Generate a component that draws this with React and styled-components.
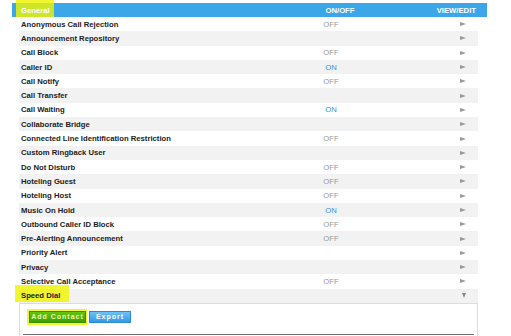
import styled, { createGlobalStyle } from "styled-components";

const GlobalStyle = createGlobalStyle`
  body {
    margin: 0;
    background: #fff;
    font-family: "Liberation Sans", Arial, sans-serif;
  }
`;

const Page = styled.div`
  width: 511px;
  height: 336px;
  overflow: hidden;
  padding: 3px 0 0 12px;
  box-sizing: border-box;
`;

const Header = styled.div`
  width: 475px;
  height: 14px;
  background: #3ba7e9;
  display: grid;
  grid-template-columns: 279px 80px 1fr;
  align-items: center;
  color: #fff;
  font-size: 7.7px;
  font-weight: bold;
  box-sizing: border-box;
  padding-left: 9px;
`;

const HeadCell = styled.div`
  text-align: ${(p) => p.$align || "left"};
  padding-right: ${(p) => (p.$align === "right" ? "11px" : "0")};
`;

const Highlight = styled.span`
  position: relative;
  z-index: 0;
  display: inline-flex;
  align-items: center;

  &::before {
    content: "";
    position: absolute;
    z-index: -1;
    top: ${(p) => p.$t}px;
    bottom: ${(p) => p.$b}px;
    left: ${(p) => p.$l}px;
    right: ${(p) => p.$r}px;
    background: rgba(238, 244, 0, 0.82);
    pointer-events: none;
  }
`;

const List = styled.div`
  margin-left: 7px;
  width: 459px;
`;

const Row = styled.div`
  height: 14.3px;
  display: grid;
  grid-template-columns: 272px 80px 1fr;
  align-items: center;
  background: ${(p) => (p.$odd ? "#f2f2f2" : "#fff")};
  font-size: 7.7px;
`;

const Name = styled.div`
  padding-left: 2px;
  font-weight: bold;
  color: #1c1c1c;
  white-space: nowrap;
`;

const Status = styled.div`
  text-align: center;
  color: ${(p) => (p.$on ? "#3d8fe0" : "#9a9a9a")};
`;

const Arrow = styled.span`
  justify-self: end;
  margin-right: 12px;
  width: 0;
  height: 0;
  ${(p) =>
    p.$open
      ? `border-top: 5px solid #888;
         border-left: 2.5px solid transparent;
         border-right: 2.5px solid transparent;
         margin-right: 12.5px;`
      : `border-left: 6px solid #999;
         border-top: 2.5px solid transparent;
         border-bottom: 2.5px solid transparent;`}
`;

const Panel = styled.div`
  border: 1px solid #dcdcdc;
  border-bottom: none;
  padding: 7px 3px 0 3px;
  height: 40px;
  box-sizing: border-box;
`;

const Actions = styled.div`
  display: flex;
  align-items: flex-start;
  gap: 3px;
  padding-left: 6px;
`;

const Button = styled.button`
  display: block;
  height: 12px;
  padding: 0;
  width: ${(p) => p.$w}px;
  border: 1px solid ${(p) => (p.$green ? "#3a8f00" : "#2b8ad6")};
  background: ${(p) =>
    p.$green
      ? "linear-gradient(#62c414, #3f9e00)"
      : "linear-gradient(#6cc2f7, #3399e6)"};
  color: ${(p) => (p.$green ? "#eaf7b0" : "#fff")};
  font-family: "Liberation Sans", Arial, sans-serif;
  font-weight: bold;
  font-size: 7px;
  letter-spacing: 1px;
  line-height: 10px;
  box-sizing: border-box;
  cursor: pointer;
`;

const Table = styled.div`
  margin-top: 11px;
  border-top: 1px solid #6e6e6e;
`;

const services = [
  ["Anonymous Call Rejection", "OFF"],
  ["Announcement Repository", ""],
  ["Call Block", "OFF"],
  ["Caller ID", "ON"],
  ["Call Notify", "OFF"],
  ["Call Transfer", ""],
  ["Call Waiting", "ON"],
  ["Collaborate Bridge", ""],
  ["Connected Line Identification Restriction", "OFF"],
  ["Custom Ringback User", ""],
  ["Do Not Disturb", "OFF"],
  ["Hoteling Guest", "OFF"],
  ["Hoteling Host", "OFF"],
  ["Music On Hold", "ON"],
  ["Outbound Caller ID Block", "OFF"],
  ["Pre-Alerting Announcement", "OFF"],
  ["Priority Alert", ""],
  ["Privacy", ""],
  ["Selective Call Acceptance", "OFF"],
];

export default function App() {
  return (
    <>
      <GlobalStyle />
      <Page>
        <Header>
          <HeadCell>
            <Highlight $t={-6} $b={-2} $l={-5} $r={-4}>
              General
            </Highlight>
          </HeadCell>
          <HeadCell $align="center">ON/OFF</HeadCell>
          <HeadCell $align="right">VIEW/EDIT</HeadCell>
        </Header>
        <List>
          {services.map(([name, status], i) => (
            <Row key={name} $odd={i % 2 === 1}>
              <Name>{name}</Name>
              <Status $on={status === "ON"}>{status}</Status>
              <Arrow />
            </Row>
          ))}
          <Row $odd>
            <Name>
              <Highlight $t={-6} $b={-2} $l={-6} $r={-9}>
                Speed Dial
              </Highlight>
            </Name>
            <Status />
            <Arrow $open />
          </Row>
          <Panel>
            <Actions>
              <Highlight $t={-2} $b={-2} $l={-2} $r={-1}>
                <Button $green $w={57}>
                  Add Contact
                </Button>
              </Highlight>
              <Button $w={42}>Export</Button>
            </Actions>
            <Table />
          </Panel>
        </List>
      </Page>
    </>
  );
}
